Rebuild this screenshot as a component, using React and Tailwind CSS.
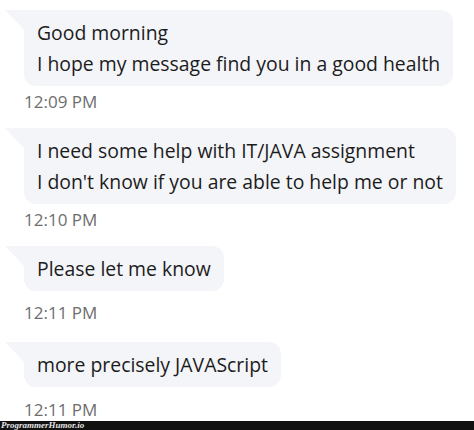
import React from "react";

// py = relleno vertical del globo, mt = espacio globo-hora, mb = espacio hasta el siguiente
const messages = [
  { lines: ["Good morning", "I hope my message find you in a good health"], time: "12:09 PM", py: "py-[7px]", mt: "mt-[6px]", mb: "mb-[16px]" },
  { lines: ["I need some help with IT/JAVA assignment", "I don't know if you are able to help me or not"], time: "12:10 PM", py: "py-[7px]", mt: "mt-[6px]", mb: "mb-[16px]" },
  { lines: ["Please let me know"], time: "12:11 PM", py: "py-[7px]", mt: "mt-[12px]", mb: "mb-[19px]" },
  { lines: ["more precisely JAVAScript"], time: "12:11 PM", py: "py-[7px]", mt: "mt-[13px]", mb: "mb-0" },
];

function Bubble({ lines, py }) {
  return (
    <div className={"relative inline-block rounded-[12px] rounded-tl-none bg-[#f4f5f9] px-[13px] " + py}>
      {/* coda del globo */}
      <svg
        className="absolute top-0 left-[-19px]"
        width="19"
        height="20"
        viewBox="0 0 19 20"
      >
        <polygon points="0,0 19,0 19,20" fill="#f4f5f9" />
      </svg>
      {lines.map((l) => (
        <div key={l} className="text-[19.4px] leading-[31px] text-[#1c1c1c] whitespace-nowrap">
          {l}
        </div>
      ))}
    </div>
  );
}

export default function App() {
  return (
    <div
      className="w-[474px] h-[430px] bg-white flex flex-col overflow-hidden"
      style={{ fontFamily: '"Open Sans", sans-serif' }}
    >
      <div className="flex-1 pl-[24px] pt-[10px] flex flex-col">
        {messages.map((m, i) => (
          <div key={i} className={"flex flex-col items-start " + m.mb}>
            <Bubble lines={m.lines} py={m.py} />
            <div className={"text-[17px] leading-[20px] text-[#6e6e6e] " + m.mt}>{m.time}</div>
          </div>
        ))}
      </div>
      <div className="h-[9px] shrink-0 bg-[#111] flex items-center pl-[1px]">
        <span
          className="text-[9px] leading-[9px] italic font-bold text-[#e5e5e5]"
          style={{ fontFamily: '"Liberation Serif", serif' }}
        >
          ProgrammerHumor.io
        </span>
      </div>
    </div>
  );
}
